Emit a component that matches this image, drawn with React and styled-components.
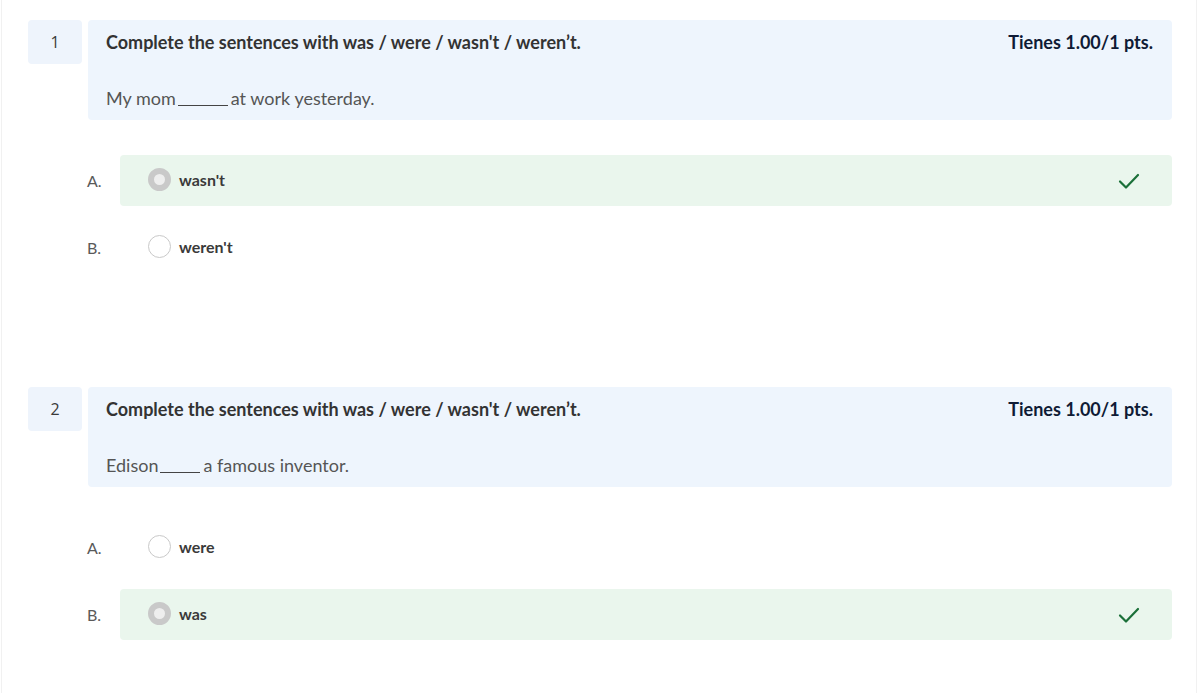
import React from "react";
import styled, { createGlobalStyle } from "styled-components";

const Global = createGlobalStyle`
  html, body { margin: 0; padding: 0; background: #fff; }
  body { font-family: Lato, "Open Sans", sans-serif; }
`;

const Page = styled.div`
  box-sizing: border-box;
  width: 1196px;
  height: 693px;
  margin-left: 1px;
  border-left: 1px solid #f1f1f1;
  border-right: 1px solid #f1f1f1;
  padding: 20px 0 0 26px;
  overflow: hidden;
`;

const Question = styled.section`
  height: 367px;
`;

const Header = styled.div`
  display: flex;
  gap: 6px;
`;

const Number = styled.div`
  width: 54px;
  height: 44px;
  border-radius: 4px;
  background: #eef4fc;
  display: flex;
  align-items: center;
  justify-content: center;
  font-size: 16px;
  color: #3a3a3a;
  font-family: "Open Sans", sans-serif;
`;

const Body = styled.div`
  box-sizing: border-box;
  width: 1084px;
  height: 100px;
  border-radius: 4px;
  background: #eef5fd;
  padding: 11px 19px 0 18px;
`;

const TitleRow = styled.div`
  display: flex;
  justify-content: space-between;
  align-items: center;
  height: 22px;
`;

const Title = styled.div`
  font-size: 18px;
  font-weight: 700;
  color: #333;
`;

const Score = styled.div`
  font-size: 18px;
  font-weight: 700;
  color: #0f1b35;
`;

const Sentence = styled.div`
  margin-top: 33px;
  font-size: 18px;
  color: #555;
  line-height: 24px;
`;

const Blank = styled.span`
  display: inline-block;
  width: ${(p) => p.w}px;
  height: 0;
  border-bottom: 1px solid #444;
  margin: 0 3px 0 2px;
  vertical-align: -1px;
`;

const Options = styled.div`
  margin-top: 35px;
  display: flex;
  flex-direction: column;
  gap: 16px;
`;

const OptionRow = styled.div`
  display: flex;
  align-items: center;
  height: 51px;
`;

const Letter = styled.div`
  width: 92px;
  box-sizing: border-box;
  padding-left: 59px;
  font-size: 16px;
  color: #5a5a5a;
`;

const Choice = styled.div`
  box-sizing: border-box;
  width: 1052px;
  height: 51px;
  border-radius: 4px;
  background: ${(p) => (p.correct ? "#eaf6ed" : "transparent")};
  display: flex;
  align-items: center;
  padding: 0 32px 0 28px;
`;

const Radio = styled.span`
  box-sizing: border-box;
  width: 23px;
  height: 23px;
  border-radius: 50%;
  flex: none;
  margin-top: -2px;
  ${(p) =>
    p.checked
      ? "border: 6px solid #c9c9c9; background: #eeeeee;"
      : "border: 1px solid #c9c9c9; background: #fff;"}
`;

const ChoiceText = styled.span`
  margin-left: 8px;
  margin-top: -2px;
  font-size: 16px;
  font-weight: 700;
  color: #3a3a3a;
  flex: 1;
`;

const Check = () => (
  <svg width="22" height="18" viewBox="0 0 22 18" fill="none">
    <path d="M2 9.5 L8 15.5 L20 3" stroke="#1b7039" strokeWidth="2.2" strokeLinecap="round" strokeLinejoin="round" />
  </svg>
);

const data = [
  {
    n: 1,
    pre: "My mom",
    blank: 50,
    post: "at work yesterday.",
    options: [
      { l: "A.", t: "wasn't", c: true },
      { l: "B.", t: "weren't", c: false },
    ],
  },
  {
    n: 2,
    pre: "Edison",
    blank: 40,
    post: "a famous inventor.",
    options: [
      { l: "A.", t: "were", c: false },
      { l: "B.", t: "was", c: true },
    ],
  },
];

export default function App() {
  return (
    <>
      <Global />
      <Page>
        {data.map((q) => (
          <Question key={q.n}>
            <Header>
              <Number>{q.n}</Number>
              <Body>
                <TitleRow>
                  <Title>Complete the sentences with was / were / wasn't / weren’t.</Title>
                  <Score>Tienes 1.00/1 pts.</Score>
                </TitleRow>
                <Sentence>
                  {q.pre}
                  <Blank w={q.blank} />
                  {q.post}
                </Sentence>
              </Body>
            </Header>
            <Options>
              {q.options.map((o) => (
                <OptionRow key={o.l}>
                  <Letter>{o.l}</Letter>
                  <Choice correct={o.c}>
                    <Radio checked={o.c} />
                    <ChoiceText>{o.t}</ChoiceText>
                    {o.c && <Check />}
                  </Choice>
                </OptionRow>
              ))}
            </Options>
          </Question>
        ))}
      </Page>
    </>
  );
}
